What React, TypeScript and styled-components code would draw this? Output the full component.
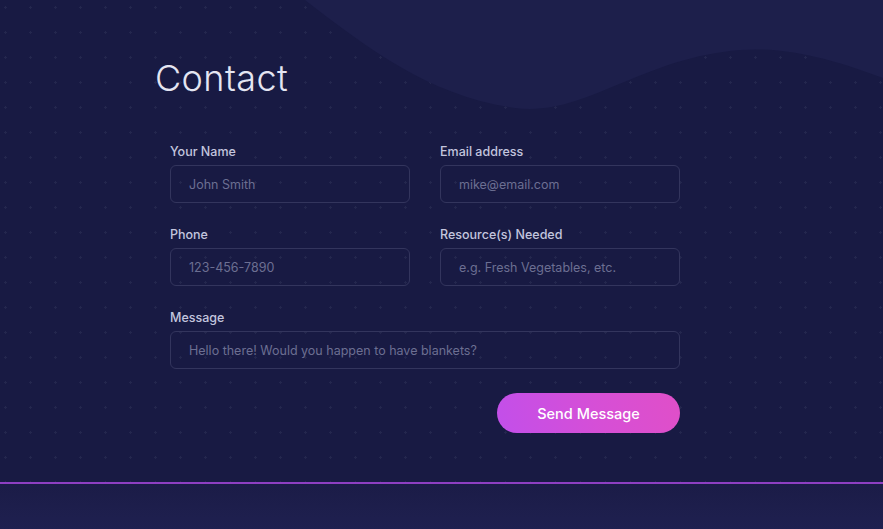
import React from "react"
import styled, { createGlobalStyle } from "styled-components"

const GlobalStyle = createGlobalStyle`
  html, body {
    margin: 0;
    padding: 0;
    background: #181a43;
    font-family: 'Inter', 'Liberation Sans', sans-serif;
  }
  * { box-sizing: border-box; }
`

const Page = styled.div`
  width: 100%;
  height: 529px;
  overflow: hidden;
  display: flex;
  flex-direction: column;
`

const Section = styled.section`
  position: relative;
  height: 484px;
  flex-shrink: 0;
  background-color: #181a43;
  background-image: radial-gradient(circle, #24274e 1px, transparent 1.4px);
  background-size: 25px 25px;
  background-position: -7px -5px;
  border-bottom: 2px solid #8e3fc2;
`

const Wave = styled.svg`
  position: absolute;
  top: 0;
  left: 0;
  width: 883px;
  height: 130px;
  pointer-events: none;
`

const Container = styled.div`
  position: relative;
  width: 540px;
  margin-left: 155px;
  padding-top: 56px;
`

const Title = styled.h1`
  margin: 0 0 44px;
  font-weight: 300;
  font-size: 36px;
  line-height: 44px;
  letter-spacing: 0.4px;
  color: #e4e5f2;
`

const Form = styled.form`
  padding: 0 15px;
  display: grid;
  grid-template-columns: 240px 240px;
  column-gap: 30px;
  row-gap: 24px;
`

const Field = styled.label<{ $wide?: boolean }>`
  display: flex;
  flex-direction: column;
  gap: 5px;
  grid-column: ${(p) => (p.$wide ? "1 / span 2" : "auto")};
`

const Label = styled.span`
  font-size: 12.5px;
  font-weight: 500;
  line-height: 16px;
  color: #c3c5de;
`

const Input = styled.input`
  height: 38px;
  width: 100%;
  border: 1px solid #33355d;
  border-radius: 6px;
  background: transparent;
  padding: 0 18px;
  font-family: inherit;
  font-size: 12.5px;
  color: #d0d2e6;
  outline: none;
  &::placeholder {
    color: #6c6f92;
  }
`

const Actions = styled.div`
  grid-column: 1 / span 2;
  display: flex;
  justify-content: flex-end;
`

const SendButton = styled.button`
  width: 183px;
  height: 40px;
  border: none;
  border-radius: 20px;
  background: linear-gradient(75deg, #c24fea 0%, #d64fd6 55%, #e04fc8 100%);
  color: #ffffff;
  font-family: inherit;
  font-size: 14.5px;
  font-weight: 500;
  cursor: pointer;
`

const Footer = styled.footer`
  flex: 1;
  background: linear-gradient(180deg, #1b1c47 0%, #1f2050 100%);
`

export default function App() {
  return (
    <>
      <GlobalStyle />
      <Page>
        <Section>
          <Wave viewBox="0 0 883 130">
            <path
              d="M305,0 C370,50 430,96 515,108 C585,117 640,58 740,50 C790,46 840,62 883,78 L883,0 Z"
              fill="#1d1f4b"
            />
          </Wave>
          <Container>
            <Title>Contact</Title>
            <Form onSubmit={(e) => e.preventDefault()}>
              <Field>
                <Label>Your Name</Label>
                <Input placeholder="John Smith" />
              </Field>
              <Field>
                <Label>Email address</Label>
                <Input placeholder="mike@email.com" />
              </Field>
              <Field>
                <Label>Phone</Label>
                <Input placeholder="123-456-7890" />
              </Field>
              <Field>
                <Label>Resource(s) Needed</Label>
                <Input placeholder="e.g. Fresh Vegetables, etc." />
              </Field>
              <Field $wide>
                <Label>Message</Label>
                <Input placeholder="Hello there! Would you happen to have blankets?" />
              </Field>
              <Actions>
                <SendButton type="submit">Send Message</SendButton>
              </Actions>
            </Form>
          </Container>
        </Section>
        <Footer />
      </Page>
    </>
  )
}
